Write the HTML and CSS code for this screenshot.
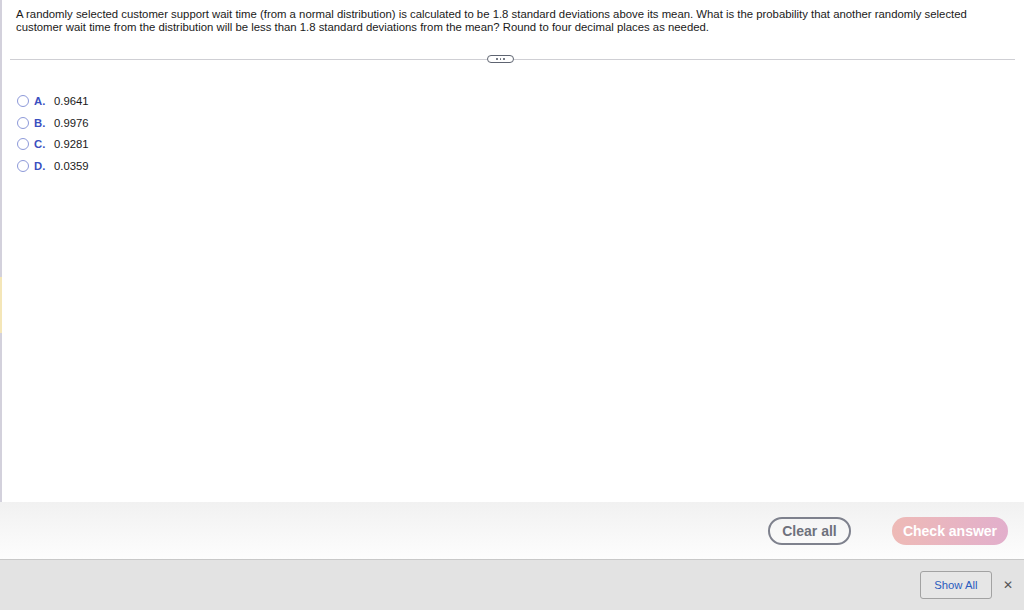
FILE: index.html
```html
<!DOCTYPE html>
<html>
<head>
<meta charset="utf-8">
<link rel="stylesheet" href="styles.css">
</head>
<body>
<div class="page">
  <main class="main">
    <div class="accent"></div>
    <p class="question">A randomly selected customer support wait time (from a normal distribution) is calculated to be 1.8 standard deviations above its mean. What is the probability that another randomly selected customer wait time from the distribution will be less than 1.8 standard deviations from the mean? Round to four decimal places as needed.</p>
    <div class="divider">
      <span class="line left"></span>
      <span class="pill"><i></i><i></i><i></i></span>
      <span class="line"></span>
    </div>
    <ul class="options">
      <li><span class="radio"></span><span class="letter">A.</span><span class="val">0.9641</span></li>
      <li><span class="radio"></span><span class="letter">B.</span><span class="val">0.9976</span></li>
      <li><span class="radio"></span><span class="letter">C.</span><span class="val">0.9281</span></li>
      <li><span class="radio"></span><span class="letter">D.</span><span class="val">0.0359</span></li>
    </ul>
  </main>
  <div class="actions">
    <button class="clear">Clear all</button>
    <button class="check">Check answer</button>
  </div>
  <div class="bottombar">
    <button class="showall">Show All</button>
    <span class="close">✕</span>
  </div>
</div>
</body>
</html>
```
FILE: styles.css
```css
* { box-sizing: border-box; }
html, body { margin: 0; padding: 0; }
body {
  width: 1024px;
  height: 610px;
  overflow: hidden;
  font-family: "Liberation Sans", Arial, sans-serif;
  background: #fff;
}
.page {
  display: flex;
  flex-direction: column;
  height: 610px;
}
.main {
  position: relative;
  height: 502px;
  border-left: 2px solid #d3d1dc;
  padding: 8px 0 0 0;
}
.accent {
  position: absolute;
  left: -2px;
  top: 277px;
  width: 2px;
  height: 56px;
  background: #f4e6b8;
}
.question {
  margin: 0 0 0 14px;
  width: 990px;
  font-size: 11.35px;
  line-height: 13px;
  color: #1a1a1a;
}
.divider {
  display: flex;
  align-items: center;
  margin: 20px 9px 0 8px;
  height: 10px;
}
.divider .line {
  flex: 1;
  height: 1px;
  background: #cfcfd4;
}
.divider .line.left {
  flex: 0 0 477px;
}
.pill {
  width: 27px;
  height: 8px;
  border: 1px solid #5e6471;
  border-radius: 5px;
  display: flex;
  align-items: center;
  justify-content: center;
  gap: 2px;
}
.pill i {
  width: 1.5px;
  height: 1.5px;
  background: #5e6471;
  border-radius: 50%;
}
.options {
  list-style: none;
  margin: 26px 0 0 15px;
  padding: 0;
}
.options li {
  display: flex;
  align-items: center;
  height: 21.7px;
  font-size: 11.3px;
  color: #1a1a1a;
}
.radio {
  width: 12px;
  height: 12px;
  border: 1.5px solid #8d99d9;
  border-radius: 50%;
  margin-right: 5px;
}
.letter {
  color: #3a4fc0;
  font-weight: bold;
  width: 20px;
}
.actions {
  height: 58px;
  background: linear-gradient(#f1f1f1, #fdfdfd);
  border-bottom: 1px solid #c8c8c8;
  display: flex;
  align-items: center;
  justify-content: flex-end;
  padding: 0 16px 0 0;
  gap: 41px;
}
.actions button {
  font-family: "Liberation Sans", Arial, sans-serif;
  font-weight: bold;
  font-size: 14px;
  border-radius: 14px;
  height: 28px;
  cursor: pointer;
}
.clear {
  width: 83px;
  background: transparent;
  border: 2px solid #7e818d;
  color: #6e717c;
  padding: 0;
}
.check {
  width: 116px;
  border: none;
  color: #fff;
  background: linear-gradient(90deg, #eebab6, #e2afcc);
  padding: 0;
}
.bottombar {
  flex: 1;
  background: #e3e3e3;
  display: flex;
  align-items: center;
  justify-content: flex-end;
  padding: 0 11px 0 0;
}
.showall {
  width: 72px;
  height: 28px;
  background: #e6e6e6;
  border: 1px solid #a2a2a2;
  border-radius: 3px;
  color: #2b5cbe;
  font-family: "Liberation Sans", Arial, sans-serif;
  font-size: 11.3px;
  padding: 0;
  margin-right: 11px;
}
.close {
  color: #555;
  font-size: 12px;
  font-family: "DejaVu Sans", sans-serif;
}
```
